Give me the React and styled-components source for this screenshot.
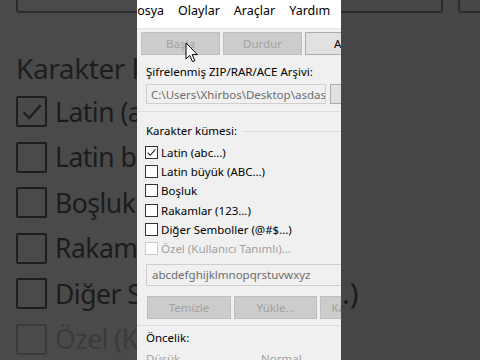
import React from "react";
import styled, { createGlobalStyle } from "styled-components";

const Global = createGlobalStyle`
  html, body { margin: 0; padding: 0; background: #464646; overflow: hidden; }
  * { box-sizing: border-box; }
`;

const Frame = styled.div`
  display: grid;
  grid-template-columns: 137px 204px 1fr;
  width: 480px;
  height: 360px;
  overflow: hidden;
  font-family: "Noto Sans", "Open Sans", sans-serif;
`;

/* ---------- zoomed background panes ---------- */
const ZoomPane = styled.div`
  background: ${(p) => p.$bg};
  overflow: hidden;
  position: relative;
  display: flex;
  flex-direction: column;
  padding-left: ${(p) => p.$pad || 0}px;
`;

const ZoomTopBox = styled.div`
  margin-top: -20px;
  height: 33px;
  width: ${(p) => p.$w}px;
  flex: none;
  border: 2px solid #2c2c2c;
  border-radius: 0 0 3px 3px;
`;

const ZoomHeading = styled.div`
  margin-top: 37px;
  font-size: 28px;
  line-height: 36px;
  color: #1e1e1e;
  white-space: nowrap;
  letter-spacing: -0.4px;
`;

const ZoomList = styled.div`
  margin-top: 10px;
  display: flex;
  flex-direction: column;
  gap: 14.5px;
`;

const ZoomRow = styled.div`
  display: flex;
  align-items: center;
  gap: 8px;
  height: 31px;
  white-space: nowrap;
  color: ${(p) => (p.$off ? "#3b3b3b" : "#1c1c1c")};
  font-size: 26.5px;
  letter-spacing: -0.5px;
`;

const ZoomBox = styled.div`
  width: 31px;
  height: 31px;
  flex: none;
  border: 2px solid ${(p) => (p.$off ? "#3a3a3a" : "#1e1e1e")};
  border-radius: 2px;
  display: flex;
  align-items: center;
  justify-content: center;
`;

const RightTopRow = styled.div`
  display: flex;
  gap: 15px;
  margin-left: -6px;
`;

const RightParen = styled.div`
  margin-top: 262px;
  margin-left: 1px;
  font-size: 29px;
  line-height: 36px;
  color: #1a1a1a;
  white-space: nowrap;
`;

/* ---------- center window ---------- */
const Window = styled.div`
  background: #f0f0f0;
  overflow: hidden;
  position: relative;
  display: flex;
  flex-direction: column;
  font-size: 11.5px;
  color: #000;
`;

const MenuBar = styled.div`
  height: 29px;
  background: #ffffff;
  border-bottom: 1px solid #e6e6e6;
  display: flex;
  align-items: flex-start;
  padding-top: 2px;
  margin-left: -9px;
  gap: 14px;
  font-size: 12.5px;
  white-space: nowrap;
  flex: none;
`;

const MenuItem = styled.span`
  line-height: 18px;
`;

const ButtonRow = styled.div`
  display: flex;
  gap: 3px;
  padding-left: ${(p) => p.$left}px;
  margin-top: ${(p) => p.$top}px;
  height: 23px;
  flex: none;
  white-space: nowrap;
`;

const Btn = styled.div`
  width: ${(p) => p.$w}px;
  flex: none;
  height: 100%;
  display: flex;
  align-items: center;
  justify-content: ${(p) => (p.$start ? "flex-start" : "center")};
  padding-left: ${(p) => (p.$start ? 28 : 0)}px;
  background: ${(p) => (p.$off ? "#cccccc" : "#e1e1e1")};
  border: 1px solid ${(p) => (p.$off ? "#bfbfbf" : "#adadad")};
  color: ${(p) => (p.$off ? "#a2a2a2" : "#000")};
  font-size: 11.5px;
`;

const Label = styled.div`
  padding-left: 9px;
  margin-top: ${(p) => p.$top || 0}px;
  line-height: 14px;
  white-space: nowrap;
  color: ${(p) => p.$color || "#000"};
  flex: none;
`;

const SubLabel = styled.span`
  width: ${(p) => p.$w || "auto"};
  flex: none;
  line-height: 14px;
  color: #a0a0a0;
  white-space: nowrap;
`;

const FieldRow = styled.div`
  display: flex;
  gap: 4px;
  padding-left: 9px;
  margin-top: ${(p) => p.$top}px;
  height: ${(p) => p.$h}px;
  flex: none;
`;

const Field = styled.div`
  width: ${(p) => p.$w}px;
  flex: none;
  border: 1px solid #cfcfcf;
  background: #f0f0f0;
  color: #6d6d6d;
  display: flex;
  align-items: center;
  padding-left: ${(p) => p.$pl || 3}px;
  white-space: nowrap;
  overflow: hidden;
`;

const SmallBtn = styled.div`
  width: 20px;
  flex: none;
  border: 1px solid #adadad;
  background: #e1e1e1;
`;

const Rule = styled.div`
  height: 1px;
  background: #dcdcdc;
  margin-top: ${(p) => p.$top}px;
  flex: none;
`;

const GroupHead = styled.div`
  display: flex;
  align-items: center;
  gap: 6px;
  padding-left: 9px;
  margin-top: ${(p) => p.$top}px;
  line-height: 14px;
  white-space: nowrap;
  flex: none;
  &::after {
    content: "";
    flex: 1;
    height: 1px;
    background: #dcdcdc;
  }
`;

const CheckList = styled.div`
  display: flex;
  flex-direction: column;
  gap: 6.2px;
  padding-left: 8px;
  margin-top: ${(p) => p.$top}px;
  flex: none;
`;

const CheckRow = styled.div`
  display: flex;
  align-items: center;
  gap: 3px;
  height: 13px;
  white-space: nowrap;
  color: ${(p) => (p.$off ? "#a0a0a0" : "#000")};
`;

const CheckBox = styled.div`
  width: 13px;
  height: 13px;
  flex: none;
  border: 1px solid ${(p) => (p.$off ? "#cccccc" : "#333333")};
  background: #ffffff;
  display: flex;
  align-items: center;
  justify-content: center;
`;

const Cursor = styled.svg`
  position: absolute;
  left: 48px;
  top: 42px;
`;

const Tick = ({ size, stroke }) => (
  <svg width={size} height={size} viewBox="0 0 12 12">
    <path d="M1.8 6.2 L4.6 9 L10.3 2.6" fill="none" stroke={stroke} strokeWidth="1.2" />
  </svg>
);

const rows = [
  { t: "Latin (abc…)", c: true },
  { t: "Latin büyük (ABC…)" },
  { t: "Boşluk" },
  { t: "Rakamlar (123…)" },
  { t: "Diğer Semboller (@#$…)" },
  { t: "Özel (Kullanıcı Tanımlı)…", off: true },
];

export default function App() {
  return (
    <>
      <Global />
      <Frame>
        <ZoomPane $bg="#4a4a4a" $pad={16}>
          <ZoomTopBox $w={140} />
          <ZoomHeading>Karakter kümesi:</ZoomHeading>
          <ZoomList>
            {rows.map((r) => (
              <ZoomRow key={r.t} $off={r.off}>
                <ZoomBox $off={r.off}>{r.c && <Tick size={24} stroke="#1e1e1e" />}</ZoomBox>
                {r.t}
              </ZoomRow>
            ))}
          </ZoomList>
        </ZoomPane>

        <Window>
          <MenuBar>
            <MenuItem>Dosya</MenuItem>
            <MenuItem>Olaylar</MenuItem>
            <MenuItem>Araçlar</MenuItem>
            <MenuItem>Yardım</MenuItem>
          </MenuBar>
          <ButtonRow $left={4} $top={3}>
            <Btn $w={79} $off>Başla</Btn>
            <Btn $w={79} $off>Durdur</Btn>
            <Btn $w={79} $start>Ara</Btn>
          </ButtonRow>
          <Label $top={10}>Şifrelenmiş ZIP/RAR/ACE Arşivi:</Label>
          <FieldRow $top={5} $h={20}>
            <Field $w={180} $pl={4}>C:\Users\Xhirbos\Desktop\asdas.rar</Field>
            <SmallBtn />
          </FieldRow>
          <Rule $top={7} />
          <GroupHead $top={12}>Karakter kümesi:</GroupHead>
          <CheckList $top={8}>
            {rows.map((r) => (
              <CheckRow key={r.t} $off={r.off}>
                <CheckBox $off={r.off}>{r.c && <Tick size={11} stroke="#222" />}</CheckBox>
                {r.t}
              </CheckRow>
            ))}
          </CheckList>
          <FieldRow $top={9} $h={22}>
            <Field $w={196} $pl={5}>abcdefghijklmnopqrstuvwxyz</Field>
          </FieldRow>
          <ButtonRow $left={10} $top={10}>
            <Btn $w={84} $off>Temizle</Btn>
            <Btn $w={83} $off>Yükle…</Btn>
            <Btn $w={60} $off>Kaydet</Btn>
          </ButtonRow>
          <Rule $top={6} />
          <Label $top={5}>Öncelik:</Label>
          <FieldRow $top={7} $h={14}>
            <SubLabel $w="111px">Düşük</SubLabel>
            <SubLabel>Normal</SubLabel>
          </FieldRow>
          <Cursor width="14" height="22" viewBox="0 0 14 22">
            <path d="M1 1 L1 17 L4.8 13.4 L7.4 19.6 L9.8 18.6 L7.2 12.6 L12.4 12.6 Z" fill="#fff" stroke="#000" strokeWidth="1" strokeLinejoin="round" />
          </Cursor>
        </Window>

        <ZoomPane $bg="#464646">
          <RightTopRow>
            <ZoomTopBox $w={108} />
            <ZoomTopBox $w={60} />
          </RightTopRow>
          <RightParen>.)</RightParen>
        </ZoomPane>
      </Frame>
    </>
  );
}
